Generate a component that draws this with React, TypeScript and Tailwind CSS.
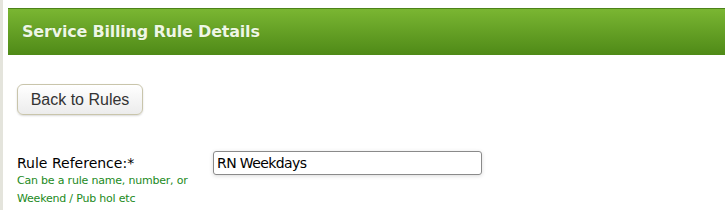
import React, { useState } from "react";

const App = () => {
  const [ruleRef, setRuleRef] = useState("RN Weekdays");

  return (
    <div className="min-h-screen bg-white" style={{ fontFamily: "Tahoma, 'DejaVu Sans', sans-serif" }}>
      <div className="flex min-h-[210px] border-l-[3px] border-[#e4e4dc]">
        <div className="flex-1 pl-[5px] pt-[8px]">
          {/* Header */}
          <div className="h-[47px] border-t border-[#4c8319] bg-gradient-to-b from-[#7ab632] to-[#4f8a17] flex items-center pl-[14px]">
            <h1 className="text-[16px] font-bold text-[#eef7e4] tracking-[-0.2px] [text-shadow:0_0_1px_rgba(0,0,0,0.25)]">
              Service Billing Rule Details
            </h1>
          </div>

          <div className="pl-[9px]">
            {/* Back button */}
            <button className="mt-[29px] h-[31px] w-[126px] rounded-[6px] border border-[#c9c5ab] bg-gradient-to-b from-white to-[#ececec] shadow-[0_1px_2px_rgba(0,0,0,0.15)] text-[16px] text-[#333]" style={{ fontFamily: "'Liberation Sans', Arial, sans-serif" }}>
              Back to Rules
            </button>

            {/* Rule reference */}
            <div className="mt-[38px] flex">
              <div className="w-[196px]">
                <div className="text-[14px] leading-[18px] text-black pt-[1px]">Rule Reference:*</div>
                <div className="text-[11px] leading-[18px] text-[#1c8a1c] tracking-[-0.2px]">
                  Can be a rule name, number, or
                  <br />
                  Weekend / Pub hol etc
                </div>
              </div>
              <input
                type="text"
                value={ruleRef}
                onChange={(e) => setRuleRef(e.target.value)}
                className="w-[269px] h-[24px] -mt-[2px] rounded-[3px] border border-[#8a8a8a] px-[3px] text-[14px] tracking-[-0.6px] text-black shadow-[0_1px_4px_rgba(0,0,0,0.15)] focus:outline-none"
              />
            </div>
          </div>
        </div>
      </div>
    </div>
  );
};

export default App;
